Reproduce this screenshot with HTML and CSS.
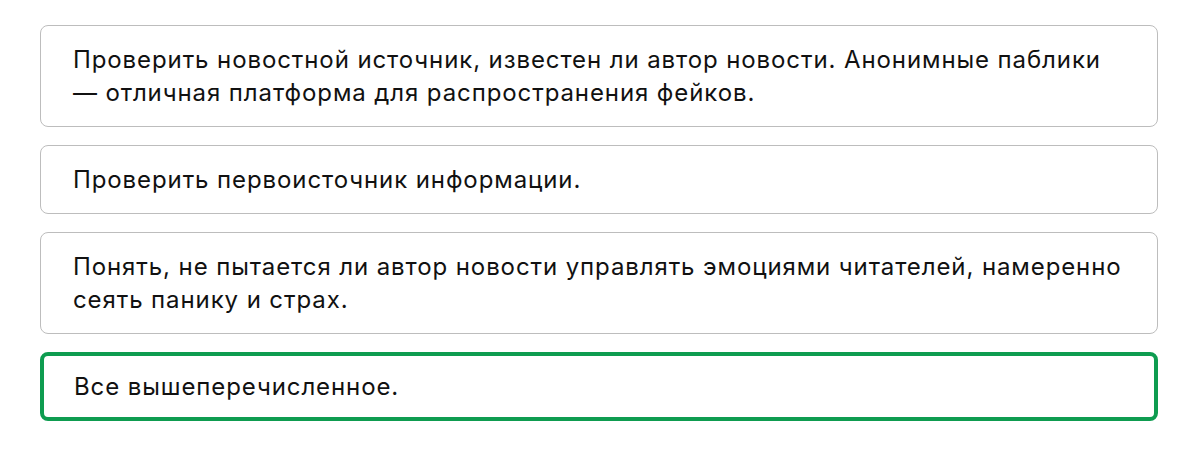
FILE: index.html
```html
<!DOCTYPE html>
<html lang="ru">
<head>
    <meta charset="UTF-8">
    <title>Тест</title>
    <link rel="stylesheet" href="styles.css">
</head>
<body>
    <div class="answers">
        <div class="answer">Проверить новостной источник, известен ли автор новости. Анонимные паблики — отличная платформа для распространения фейков.</div>
        <div class="answer">Проверить первоисточник информации.</div>
        <div class="answer">Понять, не пытается ли автор новости управлять эмоциями читателей, намеренно сеять панику и страх.</div>
        <div class="answer answer-correct">Все вышеперечисленное.</div>
    </div>
</body>
</html>
```

FILE: styles.css
```css
* {
    margin: 0;
    padding: 0;
    box-sizing: border-box;
}

body {
    background-color: #ffffff;
    color: #111111;
    font-family: Inter, "Noto Sans", sans-serif;
}

.answers {
    display: flex;
    flex-direction: column;
    gap: 18px;
    width: 1118px;
    margin: 25px 0 0 40px;
}

.answer {
    border: 1.5px solid #bdbdbd;
    border-radius: 8px;
    padding: 17px 30px 17px 32px;
    font-size: 24px;
    line-height: 33px;
    letter-spacing: 0.9px;
}

.answer-correct {
    border: 4px solid #0e9c50;
    padding: 14px 30px;
}
```
